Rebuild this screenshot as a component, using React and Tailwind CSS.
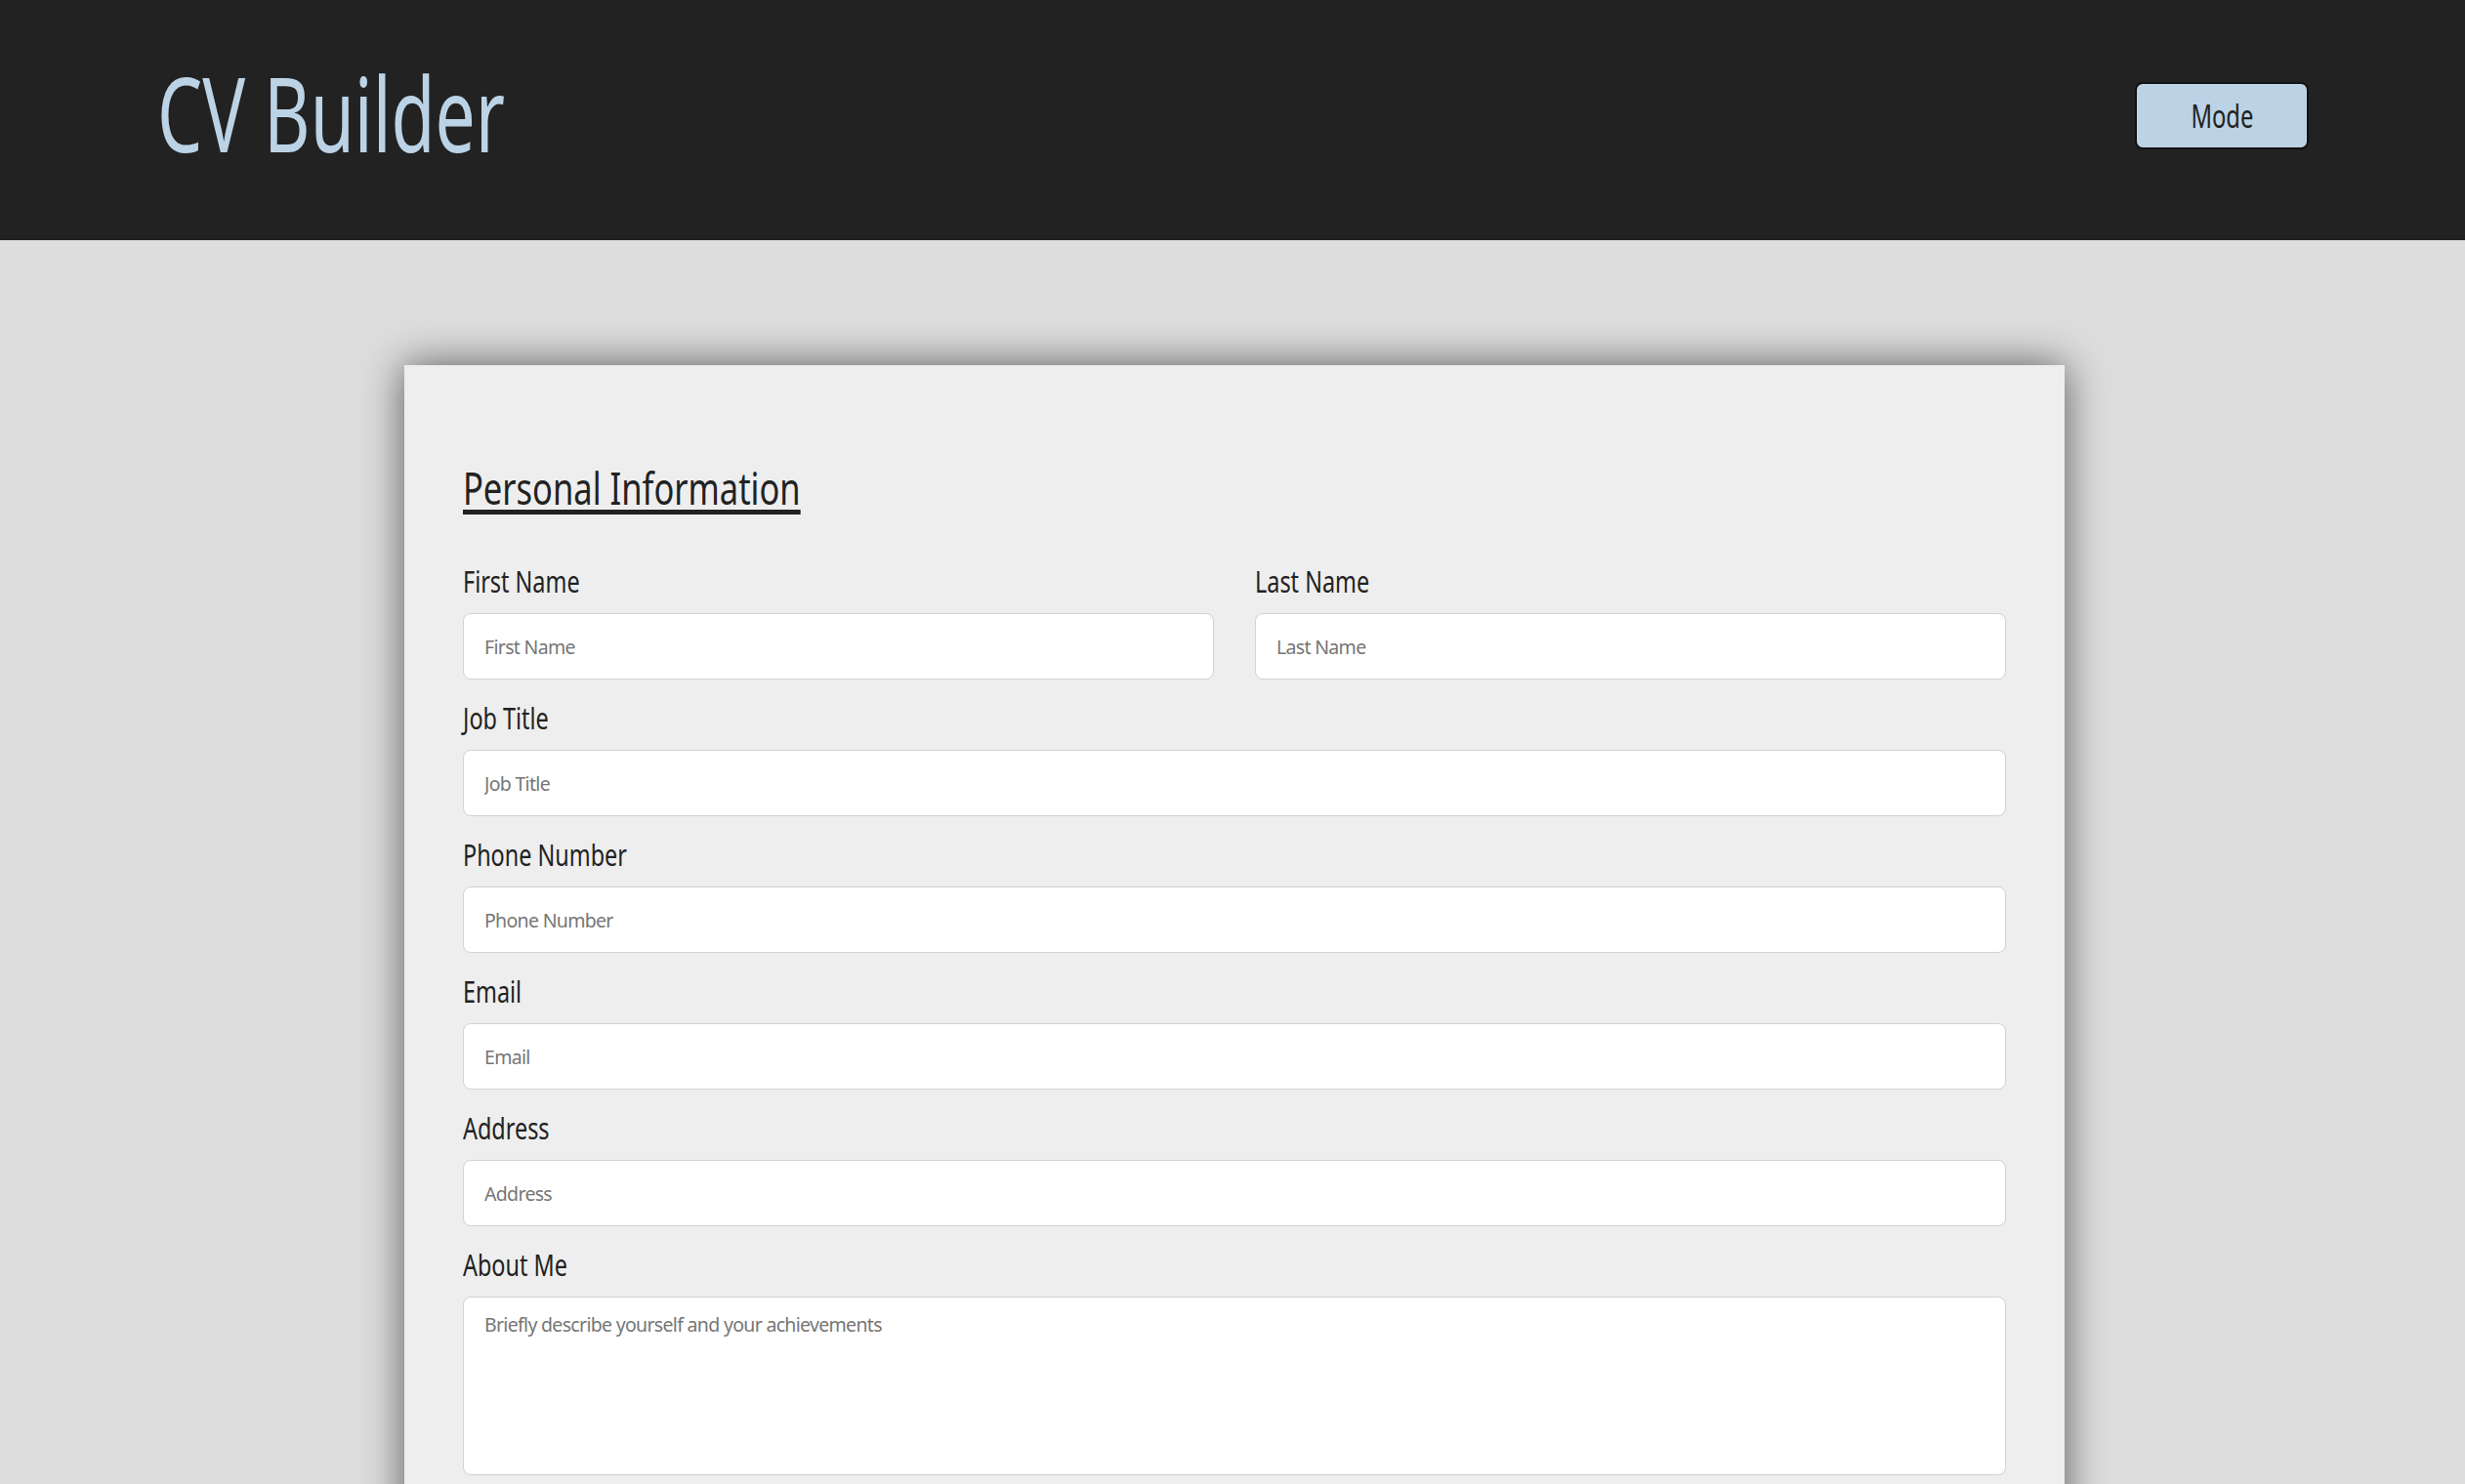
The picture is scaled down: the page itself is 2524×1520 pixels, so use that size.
import React from "react";

const FONT = "font-['Noto_Sans',sans-serif]";

function Field({ label, placeholder, textarea }) {
  return (
    <div className="flex flex-col">
      <label className={`${FONT} block text-[30px] leading-[34px] text-[#222222] mb-[15px] whitespace-nowrap`}>
        <span className="inline-block origin-left scale-x-[0.78]">{label}</span>
      </label>
      {textarea ? (
        <textarea
          placeholder={placeholder}
          className={`${FONT} h-[183px] w-full resize-none rounded-[8px] border border-[#d2d2d2] bg-white pl-[21px] pr-[20px] pt-[13px] text-[19.5px] tracking-[-0.035em] text-[#222] placeholder:text-[#767676] outline-none`}
        />
      ) : (
        <input
          type="text"
          placeholder={placeholder}
          className={`${FONT} h-[68px] w-full rounded-[8px] border border-[#d2d2d2] bg-white pl-[21px] pr-[20px] text-[19.5px] tracking-[-0.035em] text-[#222] placeholder:text-[#767676] outline-none`}
        />
      )}
    </div>
  );
}

export default function App() {
  return (
    <div className="min-h-screen bg-[#dddddd]">
      <header className="flex h-[246px] items-center justify-between bg-[#222222] pb-[10px] pl-[161px] pr-[160px]">
        <h1 className={`${FONT} pb-[6px] text-[106px] leading-none text-[#bcd3e6] whitespace-nowrap`}>
          <span className="inline-block origin-left scale-x-[0.69]">CV Builder</span>
        </h1>
        <button className={`${FONT} flex h-[69px] w-[178px] items-center justify-center rounded-[8px] border-2 border-[#111111] bg-[#bcd3e6] text-[33px] leading-none text-[#222222]`}>
          <span className="inline-block origin-center scale-x-[0.72]">Mode</span>
        </button>
      </header>
      <main className="flex justify-center pl-[4px] pt-[128px] pb-[80px]">
        <div className="w-[1700px] bg-[#eeeeee] px-[60px] pt-[98px] pb-[60px] shadow-[0_0_40px_rgba(0,0,0,0.6)]">
          <h2 className={`${FONT} text-[46px] leading-[55px] text-[#222222] whitespace-nowrap`}>
            <span className="inline-block origin-left scale-x-[0.75] underline decoration-[5px] underline-offset-[5px]">
              Personal Information
            </span>
          </h2>
          <div className="mt-[52px] grid grid-cols-2 gap-x-[42px] gap-y-[23px]">
            <Field label="First Name" placeholder="First Name" />
            <Field label="Last Name" placeholder="Last Name" />
            <div className="col-span-2">
              <Field label="Job Title" placeholder="Job Title" />
            </div>
            <div className="col-span-2">
              <Field label="Phone Number" placeholder="Phone Number" />
            </div>
            <div className="col-span-2">
              <Field label="Email" placeholder="Email" />
            </div>
            <div className="col-span-2">
              <Field label="Address" placeholder="Address" />
            </div>
            <div className="col-span-2">
              <Field label="About Me" placeholder="Briefly describe yourself and your achievements" textarea />
            </div>
          </div>
        </div>
      </main>
    </div>
  );
}
